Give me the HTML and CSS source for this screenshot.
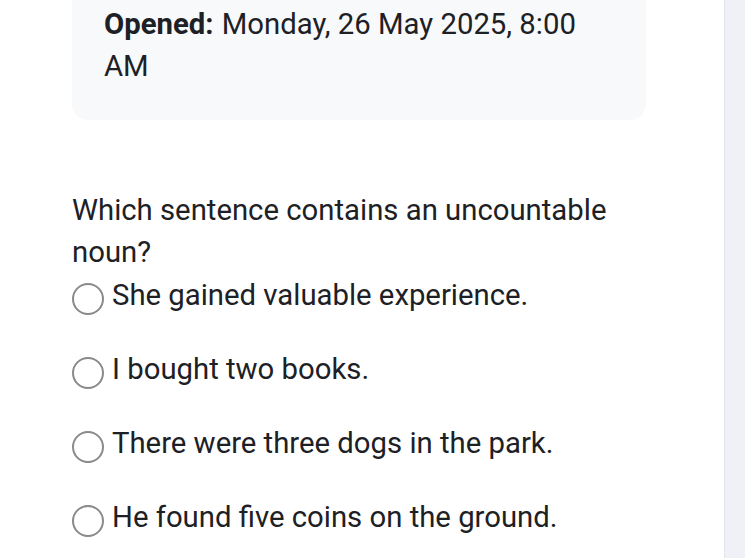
FILE: index.html
```html
<!DOCTYPE html>
<html>
<head>
<meta charset="utf-8">
<link rel="stylesheet" href="styles.css">
</head>
<body>
<div class="page">
  <main class="main">
    <div class="card">
      <p class="opened"><strong>Opened:</strong> Monday, 26 May 2025, 8:00 AM</p>
    </div>
    <div class="question">
      <p class="qtext">Which sentence contains an uncountable noun?</p>
      <div class="options">
        <label class="option"><span class="radio"></span><span>She gained valuable experience.</span></label>
        <label class="option"><span class="radio"></span><span>I bought two books.</span></label>
        <label class="option"><span class="radio"></span><span>There were three dogs in the park.</span></label>
        <label class="option"><span class="radio"></span><span>He found five coins on the ground.</span></label>
      </div>
    </div>
  </main>
  <aside class="side"></aside>
</div>
</body>
</html>
```

FILE: styles.css
```css
html, body {
  margin: 0;
  padding: 0;
  background: #fff;
  height: 100%;
  overflow: hidden;
}
body {
  font-family: Roboto, "Liberation Sans", sans-serif;
  font-size: 29.3px;
  line-height: 42px;
  color: #1d2125;
}
.page {
  display: flex;
  height: 558px;
}
.main {
  width: 652px;
  padding-left: 72px;
  flex: none;
}
.side {
  flex: 1;
  background: #f0f1f6;
  border-left: 1px solid #e2e4ea;
}
.card {
  width: 574px;
  box-sizing: border-box;
  margin-top: -29px;
  padding: 32px 32px 33px;
  background: #f8f9fa;
  border-radius: 16px;
}
.opened {
  margin: 0;
}
.opened strong {
  font-weight: 700;
  margin-right: 1px;
}
.question {
  margin-top: 69px;
  width: 574px;
}
.qtext {
  margin: 0;
}
.options {
  display: flex;
  flex-direction: column;
  gap: 32px;
  margin-top: 1px;
}
.option {
  display: flex;
  align-items: center;
  gap: 8px;
  height: 42px;
}
.radio {
  width: 32px;
  height: 32px;
  box-sizing: border-box;
  border: 2.5px solid #8a8a8a;
  border-radius: 50%;
  flex: none;
  margin-top: 8px;
}
```
